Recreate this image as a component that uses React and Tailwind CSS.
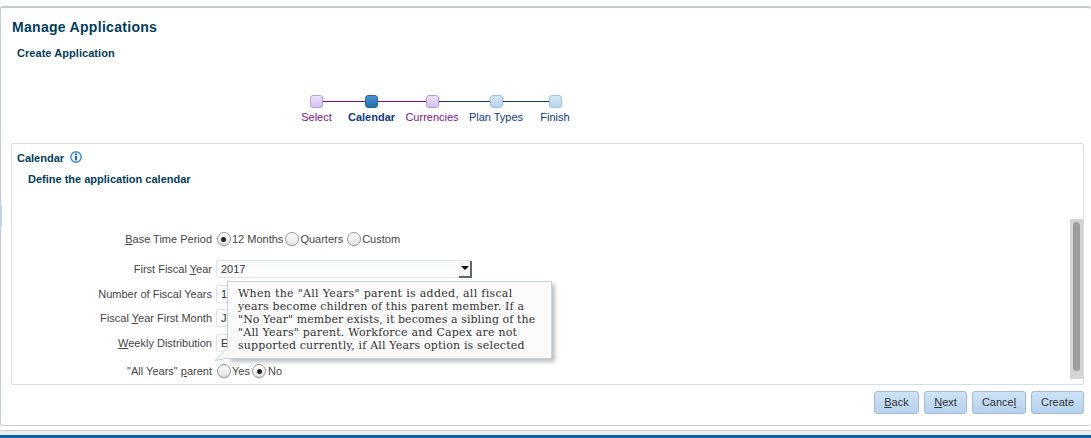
const UL = ({ children }) => <span className="underline underline-offset-1">{children}</span>;

function Radio({ checked }) {
  return (
    <span className="flex h-[15px] w-[15px] shrink-0 items-center justify-center">
      <span className="flex h-[14px] w-[14px] items-center justify-center rounded-full border border-[#9a9a9a] bg-gradient-to-b from-white to-[#e2e2e2] shadow-[0_1px_1px_rgba(0,0,0,0.15)]">
        {checked && <span className="h-[5px] w-[5px] rounded-full bg-[#222]" />}
      </span>
    </span>
  );
}

function RadioOpt({ checked, label }) {
  return (
    <span className="flex items-center gap-[1px]">
      <Radio checked={checked} />
      <span>{label}</span>
    </span>
  );
}

function Step({ label, fill, line, text, bold, first, last, w }) {
  return (
    <div className={`relative flex ${w} flex-col items-center`}>
      <div className="relative flex h-[13px] w-full items-center justify-center">
        {!first && <span className={`absolute left-0 right-1/2 top-[6px] h-[1px] ${line[0]}`} />}
        {!last && <span className={`absolute left-1/2 right-0 top-[6px] h-[1px] ${line[1]}`} />}
        <span className={`relative h-[13px] w-[13px] rounded-[3px] border ${fill}`} />
      </div>
      <span className={`mt-[3px] whitespace-nowrap text-[11px] leading-[13px] ${text} ${bold ? "font-bold" : ""}`}>{label}</span>
    </div>
  );
}

function Row({ label, mt, children }) {
  return (
    <div className={`flex h-[18px] items-center ${mt}`}>
      <div className="w-[199px] shrink-0 whitespace-nowrap pr-[4px] text-right">{label}</div>
      {children}
    </div>
  );
}

function Field({ value, w }) {
  return (
    <div className={`flex h-[18px] ${w} items-center rounded-[2px] border border-[#dfe4ea] bg-gradient-to-b from-[#f7fafc] to-white pl-[4px] text-[#333]`}>
      {value}
    </div>
  );
}

function Btn({ children, w }) {
  return (
    <button className={`flex h-[23px] ${w} items-center justify-center rounded-[3px] border border-[#9dbbd8] bg-gradient-to-b from-[#cfe2f5] to-[#b5d2ef] text-[11px] text-[#333]`}>
      {children}
    </button>
  );
}

export default function App() {
  const purple = "border-[#b79be0] bg-gradient-to-b from-[#ece0fa] to-[#d4c0f2]";
  const blue = "border-[#9dc0e0] bg-gradient-to-b from-[#d5e6f6] to-[#b8d5f0]";
  const cur = "border-[#2a6496] bg-gradient-to-b from-[#4a94d0] to-[#1f6fb0]";
  return (
    <div className="relative flex h-[438px] w-[1091px] flex-col overflow-hidden bg-white font-['Liberation_Sans',sans-serif] text-[11px] text-[#333]">
      <span className="absolute left-0 top-[205px] h-[22px] w-[2px] bg-[#bcd6ec]" />
      <div className="h-[6px] shrink-0 bg-white" />
      <div className="flex h-[420px] shrink-0 flex-col rounded-[3px] border border-t-2 border-r-0 border-[#c6ced9] border-t-[#c0c9d8] bg-white pl-[10px] pr-[6px]">
        <h1 className="ml-[1px] mt-[10px] text-[14px] font-bold leading-[18px] tracking-[0.3px] text-[#003d5b]">Manage Applications</h1>
        <h2 className="ml-[6px] mt-[10px] text-[11px] font-bold leading-[14px] tracking-[0.05px] text-[#003d5b]">Create Application</h2>

        <div className="ml-[278px] mt-[35px] flex">
          <Step w="w-[55px]" first label="Select" fill={purple} line={["", "bg-[#7d0f8c]"]} text="text-[#7d0f8c]" />
          <Step w="w-[55px]" bold label="Calendar" fill={cur} line={["bg-[#7d0f8c]", "bg-[#7d0f8c]"]} text="text-[#0b3a80]" />
          <Step w="w-[66px]" label="Currencies" fill={purple} line={["bg-[#7d0f8c]", "bg-[#0b3a80]"]} text="text-[#7d0f8c]" />
          <Step w="w-[62px]" label="Plan Types" fill={blue} line={["bg-[#0b3a80]", "bg-[#0b3a80]"]} text="text-[#0b3a80]" />
          <Step w="w-[56px]" last label="Finish" fill={blue} line={["bg-[#0b3a80]", ""]} text="text-[#0b3a80]" />
        </div>

        <div className="relative mt-[19px] h-[242px] w-[1073px] shrink-0 rounded-[2px] border border-[#d6dde5] bg-white pl-[5px]">
          <div className="mt-[7px] flex items-center gap-[6px]">
            <span className="text-[11px] font-bold leading-[14px] text-[#003d5b]">Calendar</span>
            <svg className="-mt-[3px]" width="12" height="12" viewBox="0 0 12 12">
              <circle cx="6" cy="6" r="5.2" fill="#eaf3fc" stroke="#3a86d6" strokeWidth="1.4" />
              <rect x="5.1" y="2.4" width="1.8" height="1.6" fill="#1d4f9c" />
              <rect x="5.1" y="4.8" width="1.8" height="4.6" fill="#1d4f9c" />
            </svg>
          </div>
          <div className="ml-[11px] mt-[7px] text-[11px] font-bold leading-[14px] text-[#003d5b]">Define the application calendar</div>

          <div className="mt-[44px] text-[#444]">
            <Row label={<><UL>B</UL>ase Time Period</>} mt="">
              <div className="flex items-center gap-[1px]">
                <RadioOpt checked label="12 Months" />
                <RadioOpt label="Quarters" />
                <span className="ml-[2px]"><RadioOpt label="Custom" /></span>
              </div>
            </Row>
            <Row label={<>First Fiscal <UL>Y</UL>ear</>} mt="mt-[12px]">
              <div className="flex items-center">
                <Field value="2017" w="w-[256px]" />
                <span className="-ml-[13px] flex h-[17px] w-[13px] items-center justify-center border-r-2 border-b-2 border-[#666] bg-[#f3f3f3]">
                  <span className="h-0 w-0 border-x-[4px] border-t-[4px] border-x-transparent border-t-black" />
                </span>
              </div>
            </Row>
            <Row label="Number of Fiscal Years" mt="mt-[7px]"><Field value="10" w="w-[60px]" /></Row>
            <Row label={<>Fiscal <UL>Y</UL>ear First Month</>} mt="mt-[6px]"><Field value="July" w="w-[60px]" /></Row>
            <Row label={<><UL>W</UL>eekly Distribution</>} mt="mt-[7px]"><Field value="Even" w="w-[60px]" /></Row>
            <Row label={<>"All Years" <UL>p</UL>arent</>} mt="mt-[10px]">
              <div className="flex items-center gap-[2px]">
                <RadioOpt label="Yes" />
                <RadioOpt checked label="No" />
              </div>
            </Row>
          </div>

          <div className="absolute left-[215px] top-[137px] z-10 h-[78px] w-[325px] border border-[#c5d2e0] bg-[#fafafa] pl-[10px] pt-[5px] font-['DejaVu_Serif',serif] text-[11px] leading-[13px] text-[#333] shadow-[3px_3px_4px_rgba(0,0,0,0.25)]">
            <div className="tracking-[0.3px]">When the "All Years" parent is added, all fiscal</div>
            <div className="tracking-[0.14px]">years become children of this parent member. If a</div>
            <div className="tracking-[0.07px]">"No Year" member exists, it becomes a sibling of the</div>
            <div className="tracking-[0.2px]">"All Years" parent. Workforce and Capex are not</div>
            <div className="tracking-[0.16px]">supported currently, if All Years option is selected</div>
          </div>
          <svg className="absolute left-[202px] top-[202px] z-20" width="17" height="17" viewBox="0 0 17 17">
            <path d="M14.5 1 L1 14.5 L14.5 12" fill="#fafafa" stroke="#c5d2e0" strokeWidth="1" />
          </svg>

          <div className="absolute right-0 top-[75px] flex h-[160px] w-[13px] justify-center bg-[#d4d4d4] pb-[8px] pt-[3px]">
            <div className="h-full w-[7px] rounded-full bg-[#9c9c9c]" />
          </div>
        </div>

        <div className="mt-[6px] flex w-[1073px] justify-end gap-[5px]">
          <Btn w="w-[45px]"><span><UL>B</UL>ack</span></Btn>
          <Btn w="w-[43px]"><span><UL>N</UL>ext</span></Btn>
          <Btn w="w-[54px]"><span>Cance<UL>l</UL></span></Btn>
          <Btn w="w-[53px]">Create</Btn>
        </div>
      </div>
      <div className="mt-[4px] h-[1px] shrink-0 bg-[#c6ced9]" />
      <div className="h-[4px] shrink-0 bg-[#e8ecf4]" />
      <div className="flex-1 bg-[#1160a8]" />
    </div>
  );
}
